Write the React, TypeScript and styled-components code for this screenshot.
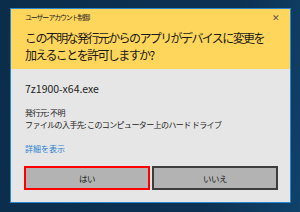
import React from "react";
import styled, { createGlobalStyle } from "styled-components";

const Global = createGlobalStyle`
  html, body { margin: 0; padding: 0; }
  body { font-family: "Noto Sans CJK JP", "Noto Sans", sans-serif; }
`;

const Desktop = styled.div`
  width: 300px;
  height: 212px;
  box-sizing: border-box;
  padding: 8px 0 0 10px;
  background: linear-gradient(100deg, #0b2d4c 0%, #0c3152 70%, #10426a 100%);
  overflow: hidden;
`;

const Dialog = styled.div`
  width: 281px;
  height: 195px;
  box-sizing: border-box;
  border: 1px solid #2b86d0;
  background: #e6e6e6;
  display: flex;
  flex-direction: column;
`;

const Header = styled.div`
  background: #ffd65c;
  height: 60px;
  box-sizing: border-box;
  padding: 2px 12px 0 14px;
  display: flex;
  flex-direction: column;
`;

const TopRow = styled.div`
  display: flex;
  justify-content: space-between;
  align-items: center;
  height: 12px;
`;

const Caption = styled.span`
  font-size: 7px;
  color: #222;
  letter-spacing: -1.2px;
`;

const Close = styled.span`
  font-size: 9px;
  color: #555;
  line-height: 1;
  margin-right: -2px;
`;

const Title = styled.div`
  margin-top: 6px;
  font-size: 12px;
  line-height: 17px;
  color: #1a1a1a;
  letter-spacing: -1.6px;
  white-space: nowrap;
`;

const Body = styled.div`
  flex: 1;
  padding: 13px 12px 0 13px;
  display: flex;
  flex-direction: column;
`;

const FileName = styled.div`
  font-size: 10.5px;
  line-height: 14px;
  color: #222;
  padding-left: 1px;
`;

const Meta = styled.div`
  margin-top: 11px;
  font-size: 8px;
  line-height: 12px;
  color: #222;
  letter-spacing: -0.6px;
  padding-left: 1px;
  white-space: nowrap;
`;

const Link = styled.div`
  margin-top: 12px;
  font-size: 8px;
  line-height: 12px;
  color: #2a7fd0;
  padding-left: 1px;
`;

const Buttons = styled.div`
  margin-top: 11px;
  display: flex;
  gap: 2px;
`;

const Button = styled.button<{ $primary?: boolean }>`
  flex: 1;
  height: 24px;
  box-sizing: border-box;
  border: 2px solid ${(p) => (p.$primary ? "#ff0000" : "#3d3d3d")};
  background: #b3b3b3;
  font-family: "Noto Sans CJK JP", sans-serif;
  font-size: 8.5px;
  color: #222;
  letter-spacing: -0.5px;
  padding: 0;
`;

export default function App() {
  return (
    <>
      <Global />
      <Desktop>
        <Dialog>
          <Header>
            <TopRow>
              <Caption>ユーザー アカウント制御</Caption>
              <Close>✕</Close>
            </TopRow>
            <Title>
              この不明な発行元からのアプリがデバイスに変更を
              <br />
              加えることを許可しますか?
            </Title>
          </Header>
          <Body>
            <FileName>7z1900-x64.exe</FileName>
            <Meta>
              発行元: 不明
              <br />
              ファイルの入手先: このコンピューター上のハード ドライブ
            </Meta>
            <Link>詳細を表示</Link>
            <Buttons>
              <Button $primary>はい</Button>
              <Button>いいえ</Button>
            </Buttons>
          </Body>
        </Dialog>
      </Desktop>
    </>
  );
}
